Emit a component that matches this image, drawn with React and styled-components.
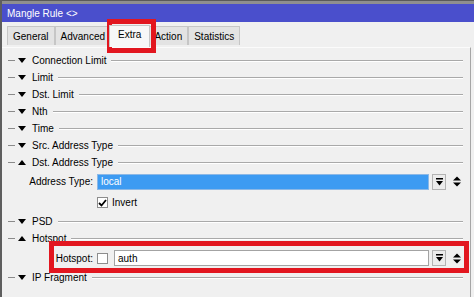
import React from 'react';
import styled, { createGlobalStyle, css } from 'styled-components';

const GlobalStyle = createGlobalStyle`
  html, body {
    margin: 0;
    padding: 0;
    background: #f0f0f0;
  }
  body {
    font-family: "Liberation Sans", Arial, sans-serif;
    font-size: 10px;
    color: #000;
  }
`;

const Window = styled.div`
  position: relative;
  width: 474px;
  height: 297px;
  overflow: hidden;
  box-sizing: border-box;
  border-left: 2px solid #5e5e5e;
  background: #f0f0f0;
  display: flex;
  flex-direction: column;
`;

const TopStrip = styled.div`
  height: 3px;
  background: #8f8f8f;
  border-top: 1px solid #5a5a5a;
`;

const TitleBar = styled.div`
  height: 18px;
  display: flex;
  align-items: center;
  padding-left: 5px;
  background: #4a4fcc;
  color: #fff;
  font-size: 10px;
`;

const TabBar = styled.div`
  height: 25px;
  display: flex;
  align-items: flex-end;
  padding-left: 5px;
  box-sizing: border-box;
`;

const Tab = styled.div`
  height: 19px;
  margin-bottom: 2px;
  padding: 0 5px;
  display: flex;
  align-items: center;
  background: #e3e3e3;
  border: 1px solid #c6c6c6;
  border-bottom: none;
  box-sizing: border-box;
  ${({ $active }) =>
    $active &&
    css`
      position: relative;
      z-index: 1;
      height: 22px;
      margin: 0 -2px;
      padding: 0 8px;
      background: #f7f7f7;
      align-items: flex-start;
      padding-top: 3px;
    `}
`;

const Panel = styled.div`
  flex: 1;
  margin-right: 3px;
  padding-top: 4px;
  border-top: 1px solid #fbfbfb;
  border-right: 1px solid #a5a5a5;
  display: flex;
  flex-direction: column;
`;

const SectionRow = styled.div`
  height: 17px;
  display: flex;
  align-items: center;
  padding-right: 7px;
`;

const Dash = styled.span`
  width: 7px;
  height: 1px;
  margin-left: 6px;
  background: #8a8a8a;
`;

const Caret = styled.svg`
  margin-left: 3px;
  margin-right: 6px;
`;

const Rule = styled.span`
  flex: 1;
  height: 1px;
  margin-left: 5px;
  background: #a9a9a9;
  border-bottom: 1px solid #ffffff;
`;

const FieldRow = styled.div`
  height: ${({ $h }) => $h}px;
  display: flex;
  align-items: center;
`;

const FieldLabel = styled.span`
  width: 91px;
  text-align: right;
  margin-right: 4px;
`;

const Input = styled.div`
  width: ${({ $w }) => $w}px;
  height: 16px;
  box-sizing: border-box;
  padding-left: 3px;
  display: flex;
  align-items: center;
  border: 1px solid ${({ $selected }) => ($selected ? '#8cb8e6' : '#a3a3a3')};
  background: ${({ $selected }) => ($selected ? '#3d9bf2' : '#ffffff')};
  color: ${({ $selected }) => ($selected ? '#ffffff' : '#000000')};
`;

const DropButton = styled.div`
  width: 14px;
  height: 16px;
  margin-left: 3px;
  box-sizing: border-box;
  border: 1px solid #b3b3b3;
  background: #ececec;
  display: flex;
  align-items: center;
  justify-content: center;
`;

const Spinner = styled.svg`
  margin-left: 7px;
`;

const Check = styled.div`
  width: 11px;
  height: 11px;
  box-sizing: border-box;
  border: 1px solid #8d8d8d;
  background: #fff;
  display: flex;
  align-items: center;
  justify-content: center;
  margin-right: ${({ $gap }) => $gap}px;
`;

const Highlight = styled.div`
  position: absolute;
  left: ${({ $x }) => $x}px;
  top: ${({ $y }) => $y}px;
  width: ${({ $w }) => $w}px;
  height: ${({ $h }) => $h}px;
  box-sizing: border-box;
  border: 5px solid #e2161f;
  pointer-events: none;
`;

const Section = ({ label, open }) => (
  <SectionRow>
    <Dash />
    <Caret width="8" height="5" viewBox="0 0 8 5">
      {open ? <polygon points="0,5 8,5 4,0" fill="#000" /> : <polygon points="0,0 8,0 4,5" fill="#000" />}
    </Caret>
    <span>{label}</span>
    <Rule />
  </SectionRow>
);

const Controls = () => (
  <>
    <DropButton>
      <svg width="7" height="8" viewBox="0 0 7 8">
        <rect x="0" y="0" width="7" height="1.5" fill="#000" />
        <polygon points="0,3 7,3 3.5,7.5" fill="#000" />
      </svg>
    </DropButton>
    <Spinner width="8" height="11" viewBox="0 0 8 11">
      <polygon points="0,4.5 8,4.5 4,0.5" fill="#000" />
      <polygon points="0,6.5 8,6.5 4,10.5" fill="#000" />
    </Spinner>
  </>
);

const tabs = ['General', 'Advanced', 'Extra', 'Action', 'Statistics'];
const collapsed = ['Connection Limit', 'Limit', 'Dst. Limit', 'Nth', 'Time', 'Src. Address Type'];

const App = () => (
  <>
    <GlobalStyle />
    <Window>
      <TopStrip />
      <TitleBar>Mangle Rule &lt;&gt;</TitleBar>
      <TabBar>
        {tabs.map((t) => (
          <Tab key={t} $active={t === 'Extra'}>
            {t}
          </Tab>
        ))}
      </TabBar>
      <Panel>
        {collapsed.map((s) => (
          <Section key={s} label={s} />
        ))}
        <Section label="Dst. Address Type" open />
        <FieldRow $h={21}>
          <FieldLabel>Address Type:</FieldLabel>
          <Input $w={332} $selected>
            local
          </Input>
          <Controls />
        </FieldRow>
        <FieldRow $h={21}>
          <FieldLabel />
          <Check $gap={4}>
            <svg width="9" height="8" viewBox="0 0 9 8">
              <polyline points="1,4 3.5,6.5 8,1" fill="none" stroke="#000" strokeWidth="1.8" />
            </svg>
          </Check>
          <span>Invert</span>
        </FieldRow>
        <Section label="PSD" />
        <Section label="Hotspot" open />
        <FieldRow $h={22}>
          <FieldLabel>Hotspot:</FieldLabel>
          <Check $gap={6} />
          <Input $w={315}>auth</Input>
          <Controls />
        </FieldRow>
        <Section label="IP Fragment" />
      </Panel>
      <Highlight $x={105} $y={19} $w={49} $h={34} />
      <Highlight $x={47} $y={241} $w={420} $h={32} />
    </Window>
  </>
);

export default App;
